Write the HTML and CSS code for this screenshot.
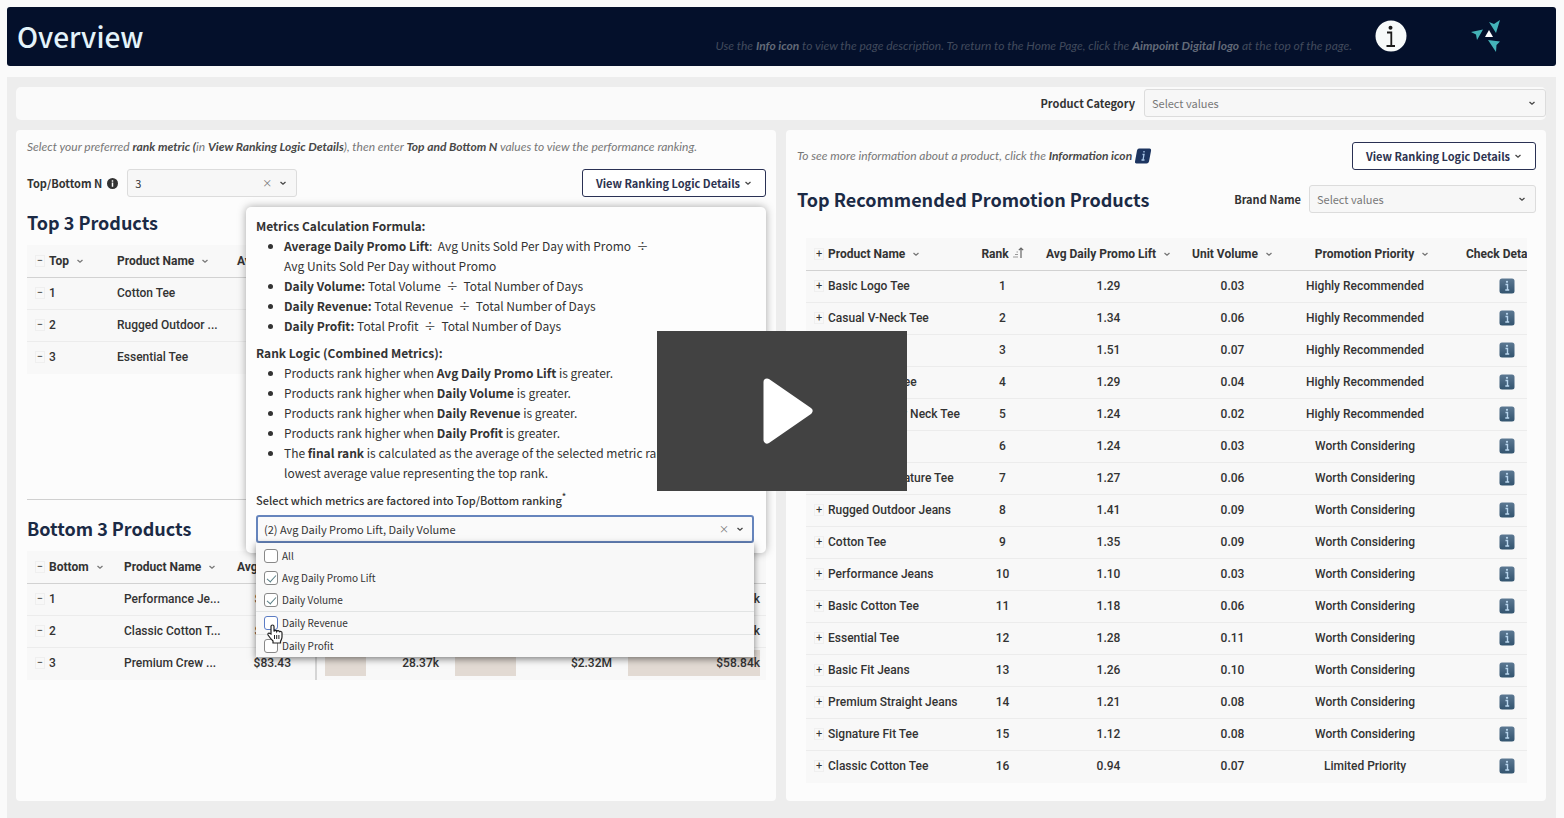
FILE: index.html
```
<!DOCTYPE html>
<html lang="en">
  <head>
    <meta charset="utf-8">
    <title>Overview</title>
    <link rel="stylesheet" href="styles.css">
  </head>
  <body>
    <!-- Shared icons -->
    <svg class="sprite" aria-hidden="true">
      <symbol id="chevron" viewBox="0 0 8 8">
        <path d="M1.5 3 L4 5.2 L6.5 3" fill="none" stroke="currentColor" stroke-width="1.3" />
      </symbol>
      <symbol id="sort" viewBox="0 0 12 14">
        <path d="M1 11h5M3 8.5h3M4.500 6h1.500" fill="none" stroke="#999" stroke-width="1.2" />
        <path d="M9 12V2M6.800 4.200L9 2l2.200 2.200" fill="none" stroke="#666" stroke-width="1.2" />
      </symbol>
      <symbol id="info" viewBox="0 0 16 16">
        <rect x="0.500" y="0.500" width="15" height="15" rx="2.500" fill="url(#infoFill)" />
        <path d="M6.500 6.500H8.500V12M6.300 12H10.200" fill="none" stroke="#b9d6ee" stroke-width="1.400" />
        <circle cx="8" cy="3.800" r="1.100" fill="#b9d6ee" />
      </symbol>
      <linearGradient id="infoFill" x1="0" y1="0" x2="0" y2="1">
        <stop offset="0" stop-color="#5c7892" />
        <stop offset="1" stop-color="#33546f" />
      </linearGradient>
    </svg>

    <header class="topbar">
      <h1>Overview</h1>
      <p class="topbar-hint">Use the <b>Info icon</b> to view the page description. To return to the Home Page, click the <b>Aimpoint Digital logo</b> at the top of the page.</p>
      <button class="info-button" aria-label="Page info">
        <svg width="32" height="32" viewBox="0 0 32 32">
          <circle cx="16" cy="16" r="15.500" fill="#f7fafa" />
          <circle cx="15.500" cy="7.800" r="2" fill="#1b1b1b" />
          <path d="M12 12.500H16.300V26M11.500 26H20" fill="none" stroke="#1b1b1b" stroke-width="1.800" />
        </svg>
      </button>
      <a class="logo" href="#" aria-label="Home">
        <svg width="32" height="34" viewBox="0 0 32 34">
          <path d="M18 3 L23 5 L29 1 L25 14 Z" fill="#44b3b8" />
          <path d="M0 13 L12 10.500 L6 21 L5 15.500 Z" fill="#44b3b8" />
          <path d="M17 21 L29 22.500 L25.500 26 L25 33 Z" fill="#44b3b8" />
          <path d="M18 11 L22 18 H14 Z" fill="#fff" />
        </svg>
      </a>
    </header>

    <main class="page">
      <div class="filter-bar">
        <label for="category">Product Category</label>
        <div class="select category-select">
          <select id="category"><option>Select values</option></select>
          <svg class="chevron"><use href="#chevron" /></svg>
        </div>
      </div>

      <div class="panels">
        <section class="panel ranking">
          <p class="hint">Select your preferred <b>rank metric (</b>in <b>View Ranking Logic Details</b>), then enter <b>Top and Bottom N</b> values to view the performance ranking.</p>
          <div class="toolbar">
            <label for="count">Top/Bottom N</label>
            <svg class="label-info" viewBox="0 0 12 12">
              <circle cx="6" cy="6" r="6" fill="#333" />
              <path d="M6 5V9.500M6 2.500V4" stroke="#fff" stroke-width="1.600" />
            </svg>
            <div class="select count-select">
              <select id="count" class="filled"><option>3</option></select>
              <button class="clear" aria-label="Clear">×</button>
              <svg class="chevron"><use href="#chevron" /></svg>
            </div>
            <div class="popover-anchor">
              <button class="outline-button">View Ranking Logic Details <svg class="chevron"><use href="#chevron" /></svg></button>

              <div class="popover">
                <h3>Metrics Calculation Formula:</h3>
                <ul>
                  <li><b>Average Daily Promo Lift</b>:&nbsp; Avg Units Sold Per Day with Promo &nbsp;÷<br>Avg Units Sold Per Day without Promo</li>
                  <li><b>Daily Volume:</b> Total Volume &nbsp;÷&nbsp; Total Number of Days</li>
                  <li><b>Daily Revenue:</b> Total Revenue &nbsp;÷&nbsp; Total Number of Days</li>
                  <li><b>Daily Profit:</b> Total Profit &nbsp;÷&nbsp; Total Number of Days</li>
                </ul>
                <h3>Rank Logic (Combined Metrics):</h3>
                <ul>
                  <li>Products rank higher when <b>Avg Daily Promo Lift</b> is greater.</li>
                  <li>Products rank higher when <b>Daily Volume</b> is greater.</li>
                  <li>Products rank higher when <b>Daily Revenue</b> is greater.</li>
                  <li>Products rank higher when <b>Daily Profit</b> is greater.</li>
                  <li>The <b>final rank</b> is calculated as the average of the selected metric ranks,<br>lowest average value representing the top rank.</li>
                </ul>
                <p class="metrics-label" id="metricsLabel">Select which metrics are factored into Top/Bottom ranking<sup>*</sup></p>
                <div class="metrics">
                  <button class="metrics-value" aria-labelledby="metricsLabel">(2) Avg Daily Promo Lift, Daily Volume</button>
                  <button class="clear" aria-label="Clear">×</button>
                  <svg class="chevron"><use href="#chevron" /></svg>
                  <div class="metrics-menu">
                    <label><input type="checkbox"> All</label>
                    <label><input type="checkbox" checked> Avg Daily Promo Lift</label>
                    <label><input type="checkbox" checked> Daily Volume</label>
                    <label class="active"><input type="checkbox"> Daily Revenue</label>
                    <label><input type="checkbox"> Daily Profit</label>
                    <svg class="pointer" viewBox="0 0 18 21">
                      <path d="M5 11V3.500a1.500 1.500 0 0 1 3 0V8.500a1.400 1.400 0 0 1 2.700 0a1.400 1.400 0 0 1 2.700.6a1.400 1.400 0 0 1 2.600.8V14c0 2-1 3-1.500 4.500V20H7V18C5 16 3 13.500 2 12c-.6-1.500 1-2.500 2-1.500Z" fill="#fff" stroke="#222" stroke-width="1.200" />
                      <path d="M8.500 12v4M10.700 12v4M12.900 12v4" stroke="#222" />
                    </svg>
                  </div>
                </div>
              </div>
            </div>
          </div>

          <div class="top-block">
            <h2>Top 3 Products</h2>
            <div class="table-clip">
              <table class="ranking-table">
                <colgroup><col class="c-no"><col class="c-name"><col class="c-lift"><col class="c-volume"><col class="c-revenue"><col class="c-profit"></colgroup>
                <thead>
                  <tr><th><i class="toggle">−</i>Top <svg class="chevron"><use href="#chevron" /></svg></th><th>Product Name <svg class="chevron"><use href="#chevron" /></svg></th><th>Avg</th><th></th><th></th><th></th></tr>
                </thead>
                <tbody>
                  <tr><td><i class="toggle">−</i>1</td><td>Cotton Tee</td><td></td><td></td><td></td><td></td></tr>
                  <tr><td><i class="toggle">−</i>2</td><td>Rugged Outdoor ...</td><td></td><td></td><td></td><td></td></tr>
                  <tr><td><i class="toggle">−</i>3</td><td>Essential Tee</td><td></td><td></td><td></td><td></td></tr>
                </tbody>
              </table>
            </div>
          </div>

          <div class="bottom-block">
            <h2>Bottom 3 Products</h2>
            <div class="table-clip">
              <table class="ranking-table bottom">
                <colgroup><col class="c-no"><col class="c-name"><col class="c-lift"><col class="c-volume"><col class="c-revenue"><col class="c-profit"></colgroup>
                <thead>
                  <tr><th><i class="toggle">−</i>Bottom <svg class="chevron"><use href="#chevron" /></svg></th><th>Product Name <svg class="chevron"><use href="#chevron" /></svg></th><th>Avg</th><th></th><th></th><th></th></tr>
                </thead>
                <tbody>
                  <tr><td><i class="toggle">−</i>1</td><td>Performance Je...</td><td class="num lift">$83.43</td><td></td><td></td><td class="num">k</td></tr>
                  <tr><td><i class="toggle">−</i>2</td><td>Classic Cotton T...</td><td class="num lift">$83.43</td><td></td><td></td><td class="num">k</td></tr>
                  <tr>
                    <td><i class="toggle">−</i>3</td>
                    <td>Premium Crew ...</td>
                    <td class="num lift">$83.43</td>
                    <td class="num divided"><div class="bar-cell"><span class="bar" style="width: 36%"></span>28.37k</div></td>
                    <td class="num"><div class="bar-cell"><span class="bar" style="width: 39%"></span>$2.32M</div></td>
                    <td class="num"><div class="bar-cell"><span class="bar" style="width: 100%"></span>$58.84k</div></td>
                  </tr>
                </tbody>
              </table>
            </div>
          </div>
        </section>

        <section class="panel recommended">
          <div class="recommended-head">
            <p class="hint">To see more information about a product, click the <b>Information icon</b> <svg class="hint-info" viewBox="0 0 18 16"><path d="M5 0.500H15.500Q17.500 0.500 17 3L15 13.500Q14.500 15.500 12.500 15.500H2.500Q0.500 15.500 1 13.500L3 2.500Q3.500 0.500 5 0.500Z" fill="#1d3560" /><path d="M8.500 6.500H10L9 12M7.500 12H10.500M10 3V4.500" fill="none" stroke="#a9c6e8" stroke-width="1.300" /></svg></p>
            <button class="outline-button">View Ranking Logic Details <svg class="chevron"><use href="#chevron" /></svg></button>
          </div>
          <div class="recommended-head">
            <h2>Top Recommended Promotion Products</h2>
            <label for="brand">Brand Name</label>
            <div class="select brand-select">
              <select id="brand"><option>Select values</option></select>
              <svg class="chevron"><use href="#chevron" /></svg>
            </div>
          </div>
          <div class="table-clip">
            <table class="product-table">
              <thead>
                <tr>
                  <th class="c-product"><i class="toggle">+</i>Product Name <svg class="chevron"><use href="#chevron" /></svg></th>
                  <th class="c-rank">Rank <svg class="sort"><use href="#sort" /></svg></th>
                  <th class="c-promo">Avg Daily Promo Lift <svg class="chevron"><use href="#chevron" /></svg></th>
                  <th class="c-unit">Unit Volume <svg class="chevron"><use href="#chevron" /></svg></th>
                  <th class="c-priority">Promotion Priority <svg class="chevron"><use href="#chevron" /></svg></th>
                  <th class="c-details">Check Details</th>
                </tr>
              </thead>
              <tbody id="products"></tbody>
            </table>
          </div>
        </section>
      </div>
    </main>

    <button class="play" aria-label="Play video">
      <svg width="50" height="66" viewBox="0 0 50 66">
        <path d="M4 4 L46 33 L4 62 Z" fill="#fff" stroke="#fff" stroke-width="7" stroke-linejoin="round" />
      </svg>
    </button>

    <script>
      const high = "Highly Recommended";
      const worth = "Worth Considering";
      const limited = "Limited Priority";

      const products = [
        ["Basic Logo Tee", "1.29", "0.03", high],
        ["Casual V-Neck Tee", "1.34", "0.06", high],
        ["Slim Jeans", "1.51", "0.07", high],
        ["Classic Polo Tee", "1.29", "0.04", high],
        ["Premium Crew Neck Tee", "1.24", "0.02", high],
        ["Slim Jeans", "1.24", "0.03", worth],
        ["Premium Signature Tee", "1.27", "0.06", worth],
        ["Rugged Outdoor Jeans", "1.41", "0.09", worth],
        ["Cotton Tee", "1.35", "0.09", worth],
        ["Performance Jeans", "1.10", "0.03", worth],
        ["Basic Cotton Tee", "1.18", "0.06", worth],
        ["Essential Tee", "1.28", "0.11", worth],
        ["Basic Fit Jeans", "1.26", "0.10", worth],
        ["Premium Straight Jeans", "1.21", "0.08", worth],
        ["Signature Fit Tee", "1.12", "0.08", worth],
        ["Classic Cotton Tee", "0.94", "0.07", limited],
      ];

      document.getElementById("products").innerHTML = products
        .map(([name, lift, volume, priority], i) => `
          <tr>
            <td><i class="toggle">+</i>${name}</td>
            <td>${i + 1}</td>
            <td>${lift}</td>
            <td>${volume}</td>
            <td>${priority}</td>
            <td><svg class="info"><use href="#info" /></svg></td>
          </tr>`)
        .join("");
    </script>
  </body>
</html>
```
FILE: styles.css
```
* {
  box-sizing: border-box;
}

body {
  margin: 0;
  padding: 7px 8px 0 7px;
  font-family: "Noto Sans CJK JP", "Noto Sans", sans-serif;
  font-size: 12px;
  line-height: 20px;
  color: #333;
  background: #fafafa;
}

h1, h2, h3, p, ul {
  margin: 0;
}

button, select {
  font: inherit;
  color: inherit;
}

label {
  font-size: 11px;
  font-weight: 700;
}

.sprite {
  position: absolute;
  width: 0;
  height: 0;
}

.chevron {
  width: 8px;
  height: 8px;
  color: #444;
}

/* Header */
.topbar {
  display: flex;
  align-items: center;
  height: 59px;
  padding: 0 53px 2px 10px;
  border-radius: 3px;
  background: #04102b;
}

.topbar h1 {
  flex: 1;
  font-size: 28px;
  font-weight: 500;
  line-height: 40px;
  color: #e4f3fa;
}

.topbar-hint {
  margin-right: 23px;
  padding-top: 20px;
  font-family: Lato, sans-serif;
  font-size: 12px;
  font-style: italic;
  color: #414a5c;
}

.topbar-hint b {
  color: #626a78;
}

.info-button {
  width: 32px;
  height: 32px;
  margin-right: 64px;
  padding: 0;
  border: none;
  background: none;
}

.logo {
  height: 34px;
}

/* Page layout */
.page {
  margin-top: 11px;
  padding: 10px 10px 17px 9px;
  background: #ededed;
}

.filter-bar {
  display: flex;
  align-items: center;
  justify-content: flex-end;
  gap: 9px;
  height: 33px;
  padding-bottom: 2px;
  border-radius: 5px;
  background: #fafafa;
}

.panels {
  display: grid;
  grid-template-columns: 1fr 1fr;
  gap: 10px;
  margin-top: 10px;
}

.panel {
  min-width: 0;
  height: 671px;
  padding: 0 10px 0 11px;
  border-radius: 4px;
  background: #fcfcfc;
}

.hint {
  font-family: Lato, sans-serif;
  font-size: 12px;
  font-style: italic;
  color: #777;
}

.hint b {
  color: #484848;
}

h2 {
  font-size: 18px;
  font-weight: 700;
  line-height: 30px;
  color: #1b2a45;
}

/* Controls */
.select {
  position: relative;
  height: 28px;
}

.select select {
  width: 100%;
  height: 28px;
  padding: 0 7px;
  border: 1px solid #dcdcdc;
  border-radius: 3px;
  background: #f7f7f7;
  font-size: 11px;
  color: #777;
  appearance: none;
}

.select .filled {
  color: #333;
}

.select .chevron,
.metrics > .chevron {
  position: absolute;
  top: 10px;
  right: 10px;
}

.clear {
  position: absolute;
  top: 4px;
  right: 25px;
  padding: 0;
  border: none;
  background: none;
  font-size: 10px;
  color: #777;
}

.category-select {
  width: 402px;
}

.count-select {
  width: 170px;
}

.brand-select {
  width: 227px;
}

.outline-button {
  display: flex;
  align-items: center;
  justify-content: center;
  gap: 4px;
  width: 184px;
  height: 28px;
  padding: 0;
  border: 1px solid #2a3154;
  border-radius: 3px;
  background: #fff;
  font-size: 11px;
  font-weight: 700;
  color: #2d3350;
}

/* Ranking panel */
.ranking {
  padding-top: 7px;
}

.toolbar {
  display: flex;
  align-items: center;
  margin-top: 12px;
}

.label-info {
  width: 11px;
  height: 11px;
  margin: 0 9px 0 5px;
}

.popover-anchor {
  position: relative;
  margin-left: auto;
}

.top-block {
  height: 303px;
  padding-top: 10px;
  border-bottom: 1px solid #d0d0d0;
}

.bottom-block {
  padding-top: 13px;
}

.table-clip {
  margin-top: 8px;
  overflow: hidden;
}

/* Tables */
table {
  border-collapse: collapse;
  table-layout: fixed;
  font-family: Roboto, sans-serif;
  background: #f8f8f8;
}

th, td {
  height: 32px;
  padding: 0 8px;
  border-bottom: 1px solid #ececec;
  font-size: 12px;
  font-weight: 500;
  text-align: left;
  white-space: nowrap;
}

th {
  border-bottom: 1px solid #d2d2d2;
  font-weight: 700;
}

tr:last-child td {
  border-bottom-color: #f8f8f8;
}

th .chevron {
  margin-left: 4px;
  color: #777;
}

.toggle {
  display: inline-block;
  width: 10px;
  height: 12px;
  margin-right: 4px;
  border: 1px solid #efefef;
  font-size: 11px;
  font-style: normal;
  font-weight: 400;
  line-height: 9px;
  text-align: center;
  vertical-align: 1px;
}

.ranking-table {
  width: 741px;
}

.c-no { width: 82px; }
.c-name { width: 120px; }
.c-lift { width: 87px; }
.c-volume { width: 131px; }
.c-revenue { width: 173px; }

.bottom .c-no { width: 89px; }
.bottom .c-name { width: 113px; }

.num {
  text-align: right;
}

.lift {
  padding-right: 24px;
}

.divided {
  border-left: 2px solid #d5d5d5;
}

.bar-cell {
  position: relative;
  z-index: 0;
  height: 26px;
  line-height: 26px;
}

.bar {
  position: absolute;
  top: 0;
  left: 0;
  z-index: -1;
  height: 26px;
  background: #e2dad3;
}

/* Recommended panel */
.recommended {
  padding-top: 12px;
}

.recommended-head {
  display: flex;
  align-items: center;
  justify-content: space-between;
}

.recommended-head + .recommended-head {
  margin-top: 14px;
}

.recommended-head h2 {
  flex: 1;
}

.recommended-head label {
  margin-right: 8px;
}

.hint-info {
  width: 18px;
  height: 16px;
  margin-left: -1px;
  vertical-align: -4px;
}

.recommended .table-clip {
  margin: 24px 9px 0;
}

.product-table {
  width: 762px;
}

.product-table th,
.product-table td {
  text-align: center;
}

.product-table th:first-child,
.product-table td:first-child {
  text-align: left;
}

.c-product { width: 163px; }
.c-rank { width: 67px; }
.c-promo { width: 145px; }
.c-unit { width: 103px; }
.c-priority { width: 162px; }

.product-table .c-priority {
  padding-left: 22px;
}

.product-table .c-details {
  padding-left: 20px;
  text-align: left;
}

.sort {
  width: 12px;
  height: 14px;
  vertical-align: -2px;
}

.info {
  display: block;
  width: 16px;
  height: 16px;
  margin: 0 auto;
}

/* Ranking logic popover */
.popover {
  position: absolute;
  top: 38px;
  right: 0;
  z-index: 2;
  width: 520px;
  padding: 9px 12px 10px 10px;
  border-radius: 5px;
  background: #fdfdfd;
  box-shadow: 0 0 8px rgba(0, 0, 0, 0.35);
}

.popover h3 {
  font-size: 12px;
  font-weight: 700;
}

.popover ul {
  padding-left: 28px;
}

.popover ul + h3 {
  margin-top: 7px;
}

.metrics-label {
  margin-top: 7px;
  font-size: 11px;
  font-weight: 500;
}

.metrics-label sup {
  line-height: 0;
}

.metrics {
  position: relative;
  margin-top: 5px;
}

.metrics-value {
  display: block;
  width: 100%;
  height: 28px;
  padding: 0 6px;
  border: 2px solid #6685bd;
  border-radius: 3px;
  background: #fafafa;
  font-size: 11px;
  text-align: left;
}

.metrics-menu {
  position: absolute;
  top: 28px;
  left: 0;
  width: 100%;
  padding-top: 2px;
  background: #f8f8f8;
  box-shadow: 0 2px 7px rgba(0, 0, 0, 0.5);
}

.metrics-menu label {
  display: flex;
  align-items: center;
  gap: 4px;
  height: 22px;
  padding-left: 8px;
  font-size: 10px;
  font-weight: 400;
}

.metrics-menu .active {
  height: 24px;
  border: solid #e2e4e4;
  border-width: 1px 0;
}

.metrics-menu input {
  width: 14px;
  height: 14px;
  margin: 0;
  border: 1px solid #888;
  border-radius: 3px;
  background: #fff;
  appearance: none;
}

.metrics-menu input:checked::after {
  content: "";
  display: block;
  width: 8px;
  height: 4px;
  margin: 3px 2px;
  border: solid #5a7f86;
  border-width: 0 0 1px 1px;
  transform: rotate(-48deg);
}

.metrics-menu .active input {
  border-color: #5b7cc4;
}

.pointer {
  position: absolute;
  top: 80px;
  left: 10px;
  width: 18px;
  height: 21px;
}

/* Video play overlay */
.play {
  position: fixed;
  top: 331px;
  left: 50%;
  z-index: 5;
  display: flex;
  align-items: center;
  justify-content: center;
  width: 250px;
  height: 160px;
  margin-left: -125px;
  padding: 0 0 0 11px;
  border: none;
  background: #424242;
}
```
